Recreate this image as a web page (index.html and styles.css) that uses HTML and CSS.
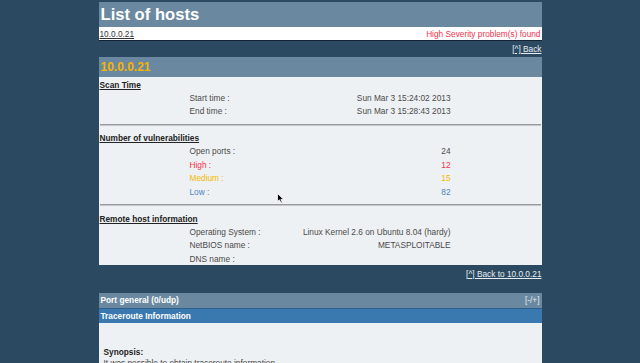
FILE: index.html
```html
<!DOCTYPE html>
<html>
<head>
<meta charset="utf-8">
<title>List of hosts</title>
<link rel="stylesheet" href="styles.css">
</head>
<body>
<div class="page">
  <div class="title">List of hosts</div>
  <div class="hostbar">
    <a class="hostlink" href="#h">10.0.0.21</a>
    <span class="sev">High Severity problem(s) found</span>
  </div>
  <div class="backrow"><a class="back" href="#top">[^] Back</a></div>

  <div class="section">
    <div class="sec-head">10.0.0.21</div>
    <div class="sec-body">
      <div class="sub-title"><span>Scan Time</span></div>
      <div class="row"><span>Start time :</span><span>Sun Mar 3 15:24:02 2013</span></div>
      <div class="row"><span>End time :</span><span>Sun Mar 3 15:28:43 2013</span></div>
      <div class="rule"></div>
      <div class="sub-title"><span>Number of vulnerabilities</span></div>
      <div class="row"><span>Open ports :</span><span>24</span></div>
      <div class="row high"><span>High :</span><span>12</span></div>
      <div class="row medium"><span>Medium :</span><span>15</span></div>
      <div class="row low"><span>Low :</span><span>82</span></div>
      <div class="rule"></div>
      <div class="sub-title"><span>Remote host information</span></div>
      <div class="row"><span>Operating System :</span><span>Linux Kernel 2.6 on Ubuntu 8.04 (hardy)</span></div>
      <div class="row"><span>NetBIOS name :</span><span>METASPLOITABLE</span></div>
      <div class="row"><span>DNS name :</span><span></span></div>
    </div>
  </div>
  <div class="backrow low-back"><a class="back" href="#h">[^] Back to 10.0.0.21</a></div>

  <div class="port">
    <div class="port-head"><span>Port general (0/udp)</span><span class="toggle">[-/+]</span></div>
    <div class="plugin-head">Traceroute Information</div>
    <div class="plugin-body">
      <div class="syn">Synopsis:</div>
      <div class="syn-text">It was possible to obtain traceroute information.</div>
    </div>
  </div>
</div>
<svg class="cursor" width="8" height="11" viewBox="0 0 8 11"><path d="M0.5 0.5 L0.5 8.5 L2.5 6.8 L4 10 L5.3 9.4 L3.9 6.3 L6.5 6.3 Z" fill="#000" stroke="#fff" stroke-width="0.8"/></svg>
</body>
</html>
```

FILE: styles.css
```css
html, body {
  margin: 0;
  padding: 0;
}
body {
  background: #2b4a62;
  font-family: "Liberation Sans", Arial, sans-serif;
  font-size: 8.3px;
  color: #444;
  height: 363px;
  overflow: hidden;
  position: relative;
}
.page {
  width: 443px;
  margin: 2px auto 0;
}
.title {
  height: 25px;
  line-height: 25px;
  background: #6a89a0;
  color: #fff;
  font-weight: bold;
  font-size: 16.6px;
  padding-left: 2px;
}
.hostbar {
  height: 13px;
  background: #fff;
  border-bottom: 1px solid #152335;
  display: flex;
  justify-content: space-between;
  align-items: center;
  padding: 0 1px;
}
.hostlink {
  color: #333;
  text-decoration: underline;
}
.sev {
  color: #f2334d;
}
.backrow {
  height: 16px;
  display: flex;
  align-items: center;
  justify-content: flex-end;
}
.low-back {
  height: 18px;
}
.back {
  color: #e9eef3;
  text-decoration: underline;
}
.sec-head {
  height: 20px;
  line-height: 20px;
  background: #6a89a0;
  color: #f5b400;
  font-weight: bold;
  font-size: 12px;
  padding-left: 2px;
}
.sec-body {
  background: #eef1f3;
  padding: 1.5px 0 0.5px;
}
.sub-title {
  height: 10px;
  line-height: 10px;
  padding-top: 1px;
  padding-left: 1px;
  font-weight: bold;
  color: #222;
}
.sub-title span {
  text-decoration: underline;
}
.row {
  display: grid;
  grid-template-columns: 1fr auto;
  margin: 0 91px;
  height: 10.5px;
  line-height: 10.5px;
  padding-top: 3px;
  color: #4a4a4a;
}
.row.high { color: #f2334d; }
.row.medium { color: #f5b800; }
.row.low { color: #4b82c3; }
.rule {
  margin: 7px 1px 6.5px;
  border-top: 1px solid #999c9f;
  border-bottom: 1px solid #c4c7ca;
}
.port {
  margin-top: 10px;
}
.port-head {
  height: 15px;
  line-height: 15px;
  background: #6a89a0;
  color: #fff;
  font-weight: bold;
  display: flex;
  justify-content: space-between;
  padding: 0 2px;
}
.toggle {
  font-weight: normal;
  color: #e3e9ee;
}
.plugin-head {
  height: 14px;
  line-height: 14px;
  border-top: 1px solid #2e5f8c;
  background: #3a78b0;
  color: #fff;
  font-weight: bold;
  padding-left: 2px;
}
.plugin-body {
  background: #eef1f3;
  padding: 24.5px 5px 20px;
  height: 60px;
}
.syn {
  font-weight: bold;
  color: #222;
  line-height: 11px;
}
.syn-text {
  line-height: 10px;
  color: #444;
}
.cursor {
  position: absolute;
  left: 277px;
  top: 193px;
}
```
